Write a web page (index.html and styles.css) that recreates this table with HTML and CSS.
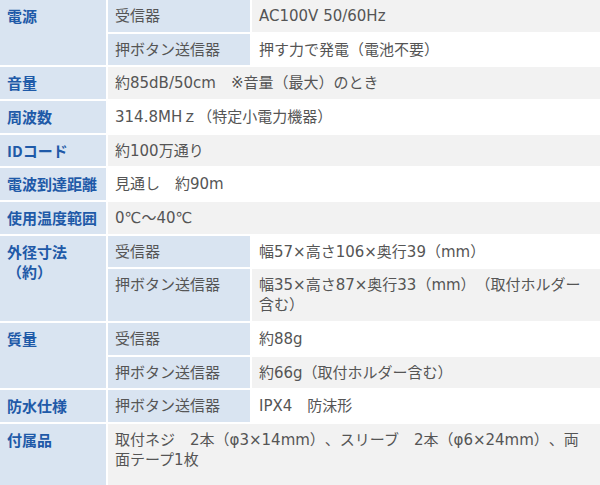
FILE: index.html
```html
<!DOCTYPE html>
<html lang="ja">
<head>
<meta charset="utf-8">
<link rel="stylesheet" href="styles.css">
</head>
<body>
<div class="spec">
  <div class="th span2">電源</div>
  <div class="sub">受信器</div>
  <div class="td g">AC100V 50/60Hz</div>
  <div class="sub">押ボタン送信器</div>
  <div class="td">押す力で発電（電池不要）</div>

  <div class="th">音量</div>
  <div class="td wide g">約85dB/50cm　※音量（最大）のとき</div>

  <div class="th">周波数</div>
  <div class="td wide">314.8MHｚ（特定小電力機器）</div>

  <div class="th">IDコード</div>
  <div class="td wide g">約100万通り</div>

  <div class="th">電波到達距離</div>
  <div class="td wide">見通し　約90m</div>

  <div class="th">使用温度範囲</div>
  <div class="td wide g">0℃～40℃</div>

  <div class="th span2">外径寸法<br>（約）</div>
  <div class="sub">受信器</div>
  <div class="td">幅57×高さ106×奥行39（mm）</div>
  <div class="sub">押ボタン送信器</div>
  <div class="td g">幅35×高さ87×奥行33（mm）（取付ホルダー<br>含む）</div>

  <div class="th span2">質量</div>
  <div class="sub">受信器</div>
  <div class="td">約88g</div>
  <div class="sub">押ボタン送信器</div>
  <div class="td g">約66g（取付ホルダー含む）</div>

  <div class="th">防水仕様</div>
  <div class="sub">押ボタン送信器</div>
  <div class="td">IPX4　防沫形</div>

  <div class="th last">付属品</div>
  <div class="td wide g last">取付ネジ　2本（φ3×14mm）、スリーブ　2本（φ6×24mm）、両<br>面テープ1枚</div>
</div>
</body>
</html>
```

FILE: styles.css
```css
html, body {
  margin: 0;
  padding: 0;
  background: #ffffff;
}
body {
  font-family: "DejaVu Sans", "Noto Sans CJK JP", sans-serif;
  font-size: 15px;
  line-height: 20px;
  color: #555555;
  text-spacing-trim: space-all;
}
.spec {
  display: grid;
  grid-template-columns: 106px 142px 1fr;
  gap: 2px;
  background: #ffffff;
}
.spec > div {
  padding: 6px 7px 5.67px;
}
.spec > .last {
  padding-bottom: 20px;
}
.th {
  background: #d9e4f1;
  color: #1f5aa8;
  font-weight: bold;
  padding-left: 8px;
  font-family: "Noto Sans CJK JP", sans-serif;
}
.span2 {
  grid-row: span 2;
}
.sub {
  background: #d9e4f1;
}
.td {
  background: #ffffff;
}
.td.g {
  background: #f2f2f2;
}
.wide {
  grid-column: span 2;
}
```
